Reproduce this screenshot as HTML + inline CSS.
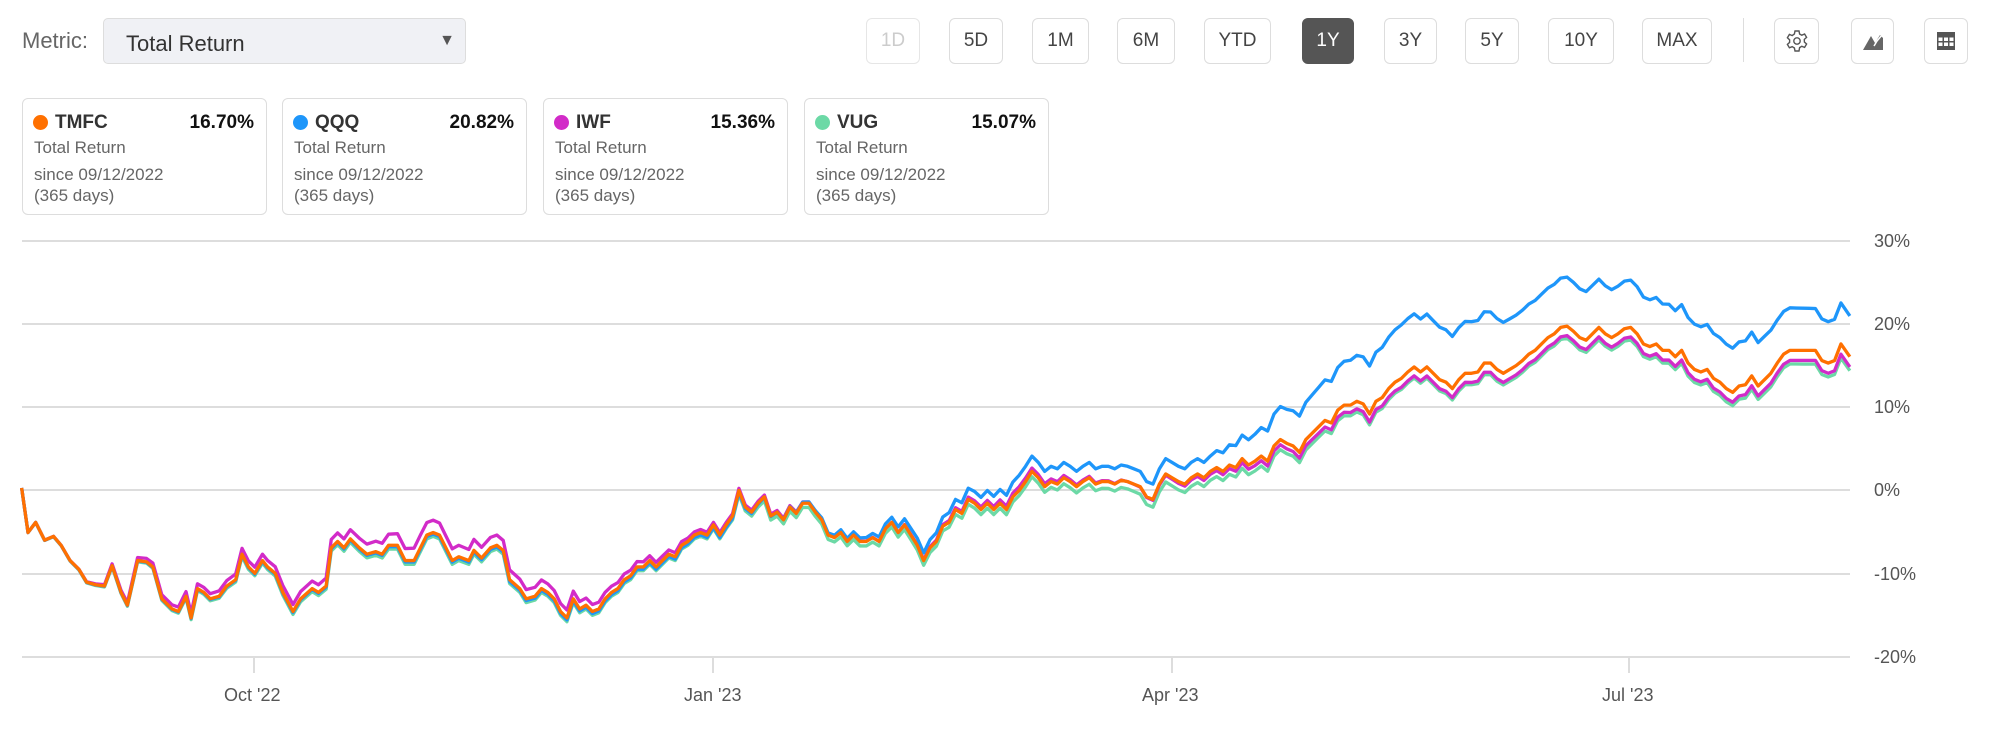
<!DOCTYPE html>
<html><head><meta charset="utf-8"><style>
*{box-sizing:border-box;margin:0;padding:0}
body{width:1998px;height:734px;background:#fff;font-family:"Liberation Sans",Arial,sans-serif;position:relative;overflow:hidden;color:#333}
.abs{position:absolute}
.metric{left:22px;top:28px;font-size:22px;color:#666}
.dd{left:103px;top:18px;width:363px;height:46px;background:#f0f1f5;border:1px solid #ddd;border-radius:5px;font-size:22px;color:#333;padding:12px 0 0 22px}
.dd span{position:absolute;right:10px;top:13px;font-size:16px;color:#555}
.btn{top:18px;height:46px;border:1px solid #ddd;border-radius:6px;font-size:19px;color:#444;display:flex;align-items:center;justify-content:center;background:#fff}
.btn.dis{color:#ccc;border-color:#e6e6e6}
.btn.act{background:#555;color:#fff;border-color:#555}
.sep{left:1743px;top:18px;width:1px;height:44px;background:#ddd}
.card{top:98px;height:117px;width:245px;border:1px solid #ddd;border-radius:6px}
.card .dot{position:absolute;left:10px;top:16px;width:15px;height:15px;border-radius:50%}
.card .tk{position:absolute;left:32px;top:13px;font-size:19px;font-weight:bold;color:#333}
.card .pc{position:absolute;right:12px;top:13px;font-size:19px;font-weight:bold;color:#111}
.card .l{position:absolute;left:11px;font-size:17px;color:#666}
.yl{left:1874px;font-size:18px;color:#555}
.xl{font-size:18px;color:#555;top:685px}
</style></head><body>
<div class="abs metric">Metric:</div>
<div class="abs dd">Total Return<span>▼</span></div>

<div class="abs btn dis" style="left:866px;width:54px">1D</div>
<div class="abs btn" style="left:949px;width:54px">5D</div>
<div class="abs btn" style="left:1032px;width:57px">1M</div>
<div class="abs btn" style="left:1117px;width:58px">6M</div>
<div class="abs btn" style="left:1204px;width:67px">YTD</div>
<div class="abs btn act" style="left:1302px;width:52px">1Y</div>
<div class="abs btn" style="left:1384px;width:53px">3Y</div>
<div class="abs btn" style="left:1465px;width:54px">5Y</div>
<div class="abs btn" style="left:1548px;width:66px">10Y</div>
<div class="abs btn" style="left:1642px;width:70px">MAX</div>
<div class="abs sep"></div>
<div class="abs btn" style="left:1774px;width:45px"><svg width="24" height="24" viewBox="0 0 24 24" fill="none" stroke="#555" stroke-width="1.4"><path d="M10 2h4l.6 3 2.2 1.2 2.8-1.2 2 3.4-2.3 2 .1 2.6 2.2 2-2 3.4-2.8-1.1-2.2 1.3L14 22h-4l-.6-3-2.2-1.3-2.8 1.1-2-3.4 2.2-2V10.8l-2.2-2 2-3.4 2.8 1.2L9.4 5z"/><circle cx="12" cy="12" r="3.2"/></svg></div>
<div class="abs btn" style="left:1851px;width:43px"><svg width="24" height="22" viewBox="0 0 24 22"><path d="M2 20 L10 6 L14 13 L19 5 L22 8 L22 20Z" fill="#666"/><path d="M13 16 L16 11 L21 5" stroke="#fff" stroke-width="1.5" fill="none"/></svg></div>
<div class="abs btn" style="left:1924px;width:44px"><svg width="20" height="20" viewBox="0 0 20 20"><rect x="1" y="1" width="18" height="18" fill="#555"/><g fill="#fff"><rect x="2.5" y="6.5" width="4" height="3.5"/><rect x="8" y="6.5" width="4" height="3.5"/><rect x="13.5" y="6.5" width="4" height="3.5"/><rect x="2.5" y="11.5" width="4" height="3.5"/><rect x="8" y="11.5" width="4" height="3.5"/><rect x="13.5" y="11.5" width="4" height="3.5"/></g></svg></div>

<div class="abs card" style="left:22px"><div class="dot" style="background:#ff7000"></div><div class="tk">TMFC</div><div class="pc">16.70%</div><div class="l" style="top:39px">Total Return</div><div class="l" style="top:66px">since 09/12/2022</div><div class="l" style="top:87px">(365 days)</div></div>
<div class="abs card" style="left:282px"><div class="dot" style="background:#1e96fa"></div><div class="tk">QQQ</div><div class="pc">20.82%</div><div class="l" style="top:39px">Total Return</div><div class="l" style="top:66px">since 09/12/2022</div><div class="l" style="top:87px">(365 days)</div></div>
<div class="abs card" style="left:543px"><div class="dot" style="background:#d22bc8"></div><div class="tk">IWF</div><div class="pc">15.36%</div><div class="l" style="top:39px">Total Return</div><div class="l" style="top:66px">since 09/12/2022</div><div class="l" style="top:87px">(365 days)</div></div>
<div class="abs card" style="left:804px"><div class="dot" style="background:#6cd9a6"></div><div class="tk">VUG</div><div class="pc">15.07%</div><div class="l" style="top:39px">Total Return</div><div class="l" style="top:66px">since 09/12/2022</div><div class="l" style="top:87px">(365 days)</div></div>

<svg class="abs" style="left:0;top:0" width="1998" height="734">
<g stroke="#ddd" stroke-width="2">
<line x1="22" x2="1850" y1="241" y2="241"/><line x1="22" x2="1850" y1="324" y2="324"/><line x1="22" x2="1850" y1="407" y2="407"/><line x1="22" x2="1850" y1="490" y2="490"/><line x1="22" x2="1850" y1="574" y2="574"/><line x1="22" x2="1850" y1="657" y2="657"/>
<line x1="254" x2="254" y1="657" y2="673"/><line x1="713" x2="713" y1="657" y2="673"/><line x1="1172" x2="1172" y1="657" y2="673"/><line x1="1629" x2="1629" y1="657" y2="673"/>
</g>
<g id="lines" transform="scale(1.274)" fill="none" stroke-width="2.6" stroke-linejoin="round"></g>
</svg>
<div class="abs yl" style="top:231px">30%</div>
<div class="abs yl" style="top:314px">20%</div>
<div class="abs yl" style="top:397px">10%</div>
<div class="abs yl" style="top:480px">0%</div>
<div class="abs yl" style="top:564px">-10%</div>
<div class="abs yl" style="top:647px">-20%</div>
<div class="abs xl" style="left:224px">Oct '22</div>
<div class="abs xl" style="left:684px">Jan '23</div>
<div class="abs xl" style="left:1142px">Apr '23</div>
<div class="abs xl" style="left:1602px">Jul '23</div>
<script>
var o=[17,383,22,418,28,410,35,424,42,421,48,428,55,440,62,447,68,457,75,459,82,460,88,444,95,465,100,475,108,440,115,441,120,445,127,470,135,478,140,480,146,468,150,485,155,462,160,465,165,470,172,468,178,460,185,455,190,435,195,445,200,450,206,440,210,445,216,450,222,465,230,480,236,470,245,462,250,465,256,460,260,430,265,425,270,430,275,423,282,430,288,435,295,433,300,435,305,428,312,428,318,440,325,440,330,430,335,420,340,418,345,420,350,430,355,440,360,437,368,440,372,432,378,438,385,430,390,428,395,432,400,455,408,462,413,470,420,468,425,462,430,465,435,470,440,480,445,485,450,470,455,478,460,475,465,480,470,478,475,470,480,465,485,462,490,455,495,452,500,445,505,445,510,440,515,445,520,440,525,435,530,437,535,428,540,425,545,420,550,418,555,420,560,412,565,420,570,412,575,405,580,385,585,398,590,402,595,395,600,390,605,405,610,402,615,408,620,398,625,403,630,395,635,395,640,402,645,408,650,420,655,422,660,418,665,425,670,420,675,425,680,425,685,422,690,425,695,415,700,410,705,418,710,412,715,420,720,428,725,440,730,430,735,425,740,413,745,410,750,400,755,403,760,392,765,395,770,400,775,395,780,400,785,395,790,400,795,390,800,385,805,378,810,370,815,375,820,382,825,378,830,380,835,375,840,378,845,382,850,378,855,375,860,380,865,378,870,378,875,380,880,377,885,378,890,380,895,382,900,390,905,392,910,380,915,372,920,375,925,378,930,380,935,375,940,372,945,375,950,370,955,367,960,370,965,365,970,367,975,360,980,365,985,362,990,358,995,362,1000,350,1005,345,1010,348,1015,350,1020,355,1025,345,1030,340,1035,335,1040,330,1045,332,1050,322,1055,318,1060,318,1065,315,1070,317,1075,325,1080,315,1085,312,1090,305,1095,300,1100,297,1105,292,1110,288,1115,292,1120,288,1125,293,1130,298,1135,300,1140,305,1145,298,1150,293,1155,293,1160,292,1165,285,1170,285,1175,290,1180,293,1185,290,1190,287,1195,283,1200,278,1205,275,1210,270,1215,265,1220,262,1225,257,1230,256,1235,260,1240,265,1245,267,1250,262,1255,257,1260,262,1265,265,1270,262,1275,258,1280,257,1285,262,1290,270,1295,272,1300,270,1305,275,1310,275,1315,280,1320,275,1325,285,1330,290,1335,292,1340,290,1345,297,1350,300,1355,305,1360,308,1365,303,1370,302,1375,295,1380,303,1385,298,1390,293,1395,285,1400,278,1405,275,1410,275,1415,275,1420,275,1425,275,1430,283,1435,285,1440,283,1445,270,1452,280];
function interp(p,x){for(var i=0;i<p.length-2;i+=2){if(x<=p[i+2]){var t=(x-p[i])/(p[i+2]-p[i]);return p[i+1]+t*(p[i+3]-p[i+1]);}}return p[p.length-1];}
var offs={
b:[17,0,570,2,700,-4,800,-12,950,-12,1000,-25,1100,-42,1250,-38,1452,-32],
m:[17,0,60,0,120,-3,250,-6,330,-10,450,-6,560,-2,700,0,800,-3,1000,4,1100,7,1452,8],
g:[17,0,300,3,560,3,800,4,1000,8,1452,11]};
function path(off){var d="";for(var i=0;i<o.length;i+=2){var x=o[i],y=o[i+1]+(off?interp(off,x):0);d+=(i?"L":"M")+x+" "+y.toFixed(1);}return d;}
var g=document.getElementById("lines"),s=[["g","#6cd9a6"],["m","#d22bc8"],["b","#1e96fa"],["o","#ff7000"]];
s.forEach(function(a){var p=document.createElementNS("http://www.w3.org/2000/svg","path");p.setAttribute("d",path(a[0]=="o"?null:offs[a[0]]));p.setAttribute("stroke",a[1]);g.appendChild(p);});
</script>
</body></html>
